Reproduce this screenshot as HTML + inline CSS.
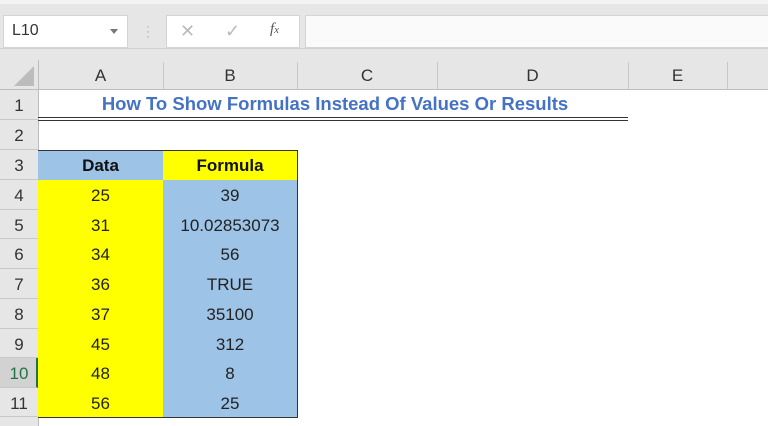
<!DOCTYPE html>
<html><head><style>
*{margin:0;padding:0;box-sizing:border-box}
body{width:768px;height:426px;overflow:hidden;background:#fff;font-family:"Liberation Sans",sans-serif;position:relative}
.a{position:absolute}
.t{font-size:17px;color:#222;text-align:center}
</style></head><body>
<div class="a" style="left:0;top:0;width:768px;height:60px;background:#e6e6e6"></div>
<div class="a" style="left:0;top:0;width:768px;height:4px;background:#f3f3f3"></div>
<div class="a" style="left:3px;top:15px;width:125px;height:33px;background:#fff;border:1px solid #d4d4d4"></div>
<div class="a" style="left:12px;top:22px;font-size:16px;color:#333">L10</div>
<div class="a" style="left:110px;top:29px;width:0;height:0;border-left:4px solid transparent;border-right:4px solid transparent;border-top:5px solid #777"></div>
<div class="a" style="left:146px;top:24px;font-size:12px;color:#aaa;line-height:5px">·<br>·<br>·</div>
<div class="a" style="left:166px;top:15px;width:134px;height:33px;background:#fff;border:1px solid #d4d4d4"></div>
<div class="a" style="left:180px;top:21px;font-size:18px;color:#bbb">✕</div>
<div class="a" style="left:225px;top:21px;font-size:18px;color:#bbb">✓</div>
<div class="a" style="left:270px;top:21px;font-size:15px;color:#555;font-family:'Liberation Serif',serif;font-style:italic">f<span style="font-size:11px">x</span></div>
<div class="a" style="left:305px;top:15px;width:470px;height:33px;background:#fafafa;border:1px solid #d4d4d4"></div>
<div class="a" style="left:0;top:48px;width:768px;height:1px;background:#d0d0d0"></div>
<div class="a" style="left:0;top:60px;width:768px;height:30px;background:#e6e6e6;border-bottom:1px solid #bdbdbd"></div>
<div class="a" style="left:14px;top:66px;width:0;height:0;border-left:20px solid transparent;border-bottom:20px solid #bcbcbc"></div>
<div class="a" style="left:38px;top:60px;width:1px;height:366px;background:#bdbdbd"></div>
<div class="a t" style="left:38px;top:66px;width:125px;color:#333">A</div>
<div class="a" style="left:163px;top:62px;width:1px;height:28px;background:#c8c8c8"></div>
<div class="a t" style="left:163px;top:66px;width:134px;color:#333">B</div>
<div class="a" style="left:297px;top:62px;width:1px;height:28px;background:#c8c8c8"></div>
<div class="a t" style="left:297px;top:66px;width:140px;color:#333">C</div>
<div class="a" style="left:437px;top:62px;width:1px;height:28px;background:#c8c8c8"></div>
<div class="a t" style="left:437px;top:66px;width:191px;color:#333">D</div>
<div class="a" style="left:628px;top:62px;width:1px;height:28px;background:#c8c8c8"></div>
<div class="a t" style="left:628px;top:66px;width:99px;color:#333">E</div>
<div class="a" style="left:727px;top:62px;width:1px;height:28px;background:#c8c8c8"></div>
<div class="a" style="left:0;top:90px;width:38px;height:336px;background:#e6e6e6"></div>
<div class="a" style="left:0px;top:93px;width:670px;text-align:center;font-size:18.5px;font-weight:bold;color:#4472c4">How To Show Formulas Instead Of Values Or Results</div>
<div class="a" style="left:38px;top:117px;width:590px;height:4px;border-top:1px solid #333;border-bottom:1px solid #333"></div>
<div class="a" style="left:38px;top:150px;width:125px;height:30px;background:#9dc3e6"></div>
<div class="a" style="left:163px;top:150px;width:134px;height:30px;background:#ffff00"></div>
<div class="a" style="left:38px;top:180px;width:125px;height:237px;background:#ffff00"></div>
<div class="a" style="left:163px;top:180px;width:134px;height:237px;background:#9dc3e6"></div>
<div class="a" style="left:38px;top:150px;width:260px;height:268px;border:1px solid #333;border-left:none"></div>
<div class="a t" style="left:38px;top:156px;width:125px;font-weight:bold;color:#111">Data</div>
<div class="a t" style="left:163px;top:156px;width:134px;font-weight:bold;color:#111">Formula</div>
<div id="rh"></div>
<script>
var ys=[90,120,150,180,210,239,269,299,329,358,388,417];
var h='';
for(var i=0;i<11;i++){
 var sel=i==9;
 h+='<div class="a" style="left:0;top:'+ys[i]+'px;width:38px;height:'+(ys[i+1]-ys[i])+'px;border-bottom:1px solid #c8c8c8;'+(sel?'background:#d2d2d2;border-right:2px solid #217346;':'')+'"></div>';
 h+='<div class="a t" style="left:0;top:'+(ys[i]+6)+'px;width:38px;color:'+(sel?'#217346':'#333')+'">'+(i+1)+'</div>';
}
var A=[25,31,34,36,37,45,48,56],B=['39','10.02853073','56','TRUE','35100','312','8','25'];
for(var j=0;j<8;j++){var y=ys[j+3]+6;
 h+='<div class="a t" style="left:38px;top:'+y+'px;width:125px">'+A[j]+'</div>';
 h+='<div class="a t" style="left:163px;top:'+y+'px;width:134px">'+B[j]+'</div>';}
document.getElementById('rh').innerHTML=h;
</script>
</body></html>
